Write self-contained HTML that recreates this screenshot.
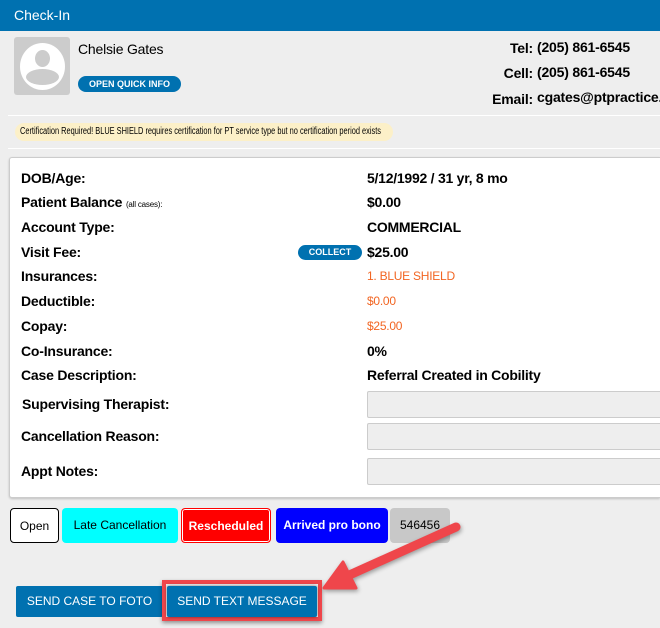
<!DOCTYPE html>
<html><head><meta charset="utf-8"><style>
*{margin:0;padding:0;box-sizing:border-box}
html,body{width:660px;height:628px;overflow:hidden}
body{background:#eee;font-family:"Liberation Sans",Arial,sans-serif;position:relative;color:#000}
#w{position:absolute;left:0;top:0;width:660px;height:628px;overflow:hidden}
.a{position:absolute;white-space:nowrap}
.hdr{left:0;top:0;width:660px;height:31px;background:#0071b0;color:#fff;font-size:14px;line-height:31px;padding-left:14px}
.b{font-weight:bold;font-size:14px;letter-spacing:-0.2px}
.pill{background:#0071b0;color:#fff;font-weight:bold;font-size:9px;border-radius:9px;text-align:center}
.lbl{left:21px;font-weight:bold;font-size:14px;letter-spacing:-0.2px}
.val{left:367px;font-weight:bold;font-size:14px;letter-spacing:-0.25px}
.or{color:#f26522;font-weight:normal;font-size:12px}
.inp{left:367px;width:293px;height:27px;background:#eee;border:1px solid #ccc;border-right:none;border-radius:2px 0 0 2px}
.st{top:508px;height:35px;border-radius:4px;font-size:12px;line-height:35px;text-align:center}
.btn{top:586px;height:31px;background:#0071b0;color:#fff;font-size:12px;line-height:31px;text-align:center;border-radius:2px}
</style></head><body><div id="w">
<div class="a hdr">Check-In</div>
<div class="a" style="left:14px;top:37px;width:56px;height:58px;background:#ccc;border-radius:3px;overflow:hidden">
<div class="a" style="left:6px;top:6px;width:45px;height:47px;background:#fff;border-radius:50%"></div>
<div class="a" style="left:21px;top:13px;width:15px;height:17px;background:#ccc;border-radius:50%"></div>
<div class="a" style="left:12px;top:32px;width:33px;height:16px;background:#ccc;border-radius:50%"></div>
</div>
<div class="a" style="left:78px;top:41px;font-size:14px;letter-spacing:-0.2px">Chelsie Gates</div>
<div class="a pill" style="left:78px;top:76px;width:103px;height:16px;line-height:16px">OPEN QUICK INFO</div>
<div class="a b" style="right:127px;top:40px">Tel:</div><div class="a b" style="left:537px;top:39px">(205) 861-6545</div>
<div class="a b" style="right:127px;top:65px">Cell:</div><div class="a b" style="left:537px;top:64px">(205) 861-6545</div>
<div class="a b" style="right:127px;top:91px">Email:</div><div class="a b" style="left:537px;top:89px;width:123px;overflow:hidden">cgates@ptpractice.com</div>
<div class="a" style="left:8px;top:115px;width:652px;height:1px;background:#fff"></div>
<div class="a" style="left:15px;top:123px;width:378px;height:18px;background:#fcf0c8;border-radius:9px;overflow:hidden"><span class="a" style="left:5px;top:0;font-size:10px;line-height:18px;transform:scaleX(.74);transform-origin:0 0">Certification Required! BLUE SHIELD requires certification for PT service type but no certification period exists</span></div>
<div class="a" style="left:8px;top:148px;width:652px;height:1px;background:#fff"></div>
<div class="a" style="left:9px;top:157px;width:651px;height:341px;background:#fff;border:1px solid #ccc;border-right:none;border-radius:3px 0 0 3px;box-shadow:0 1px 2px rgba(0,0,0,.2)"></div>
<div class="a lbl" style="top:170px">DOB/Age:</div><div class="a val" style="top:170px">5/12/1992 / 31 yr, 8 mo</div>
<div class="a lbl" style="top:194px">Patient Balance <span style="font-weight:normal;font-size:8px">(all cases):</span></div><div class="a val" style="top:194px">$0.00</div>
<div class="a lbl" style="top:219px">Account Type:</div><div class="a val" style="top:219px">COMMERCIAL</div>
<div class="a lbl" style="top:244px">Visit Fee:</div><div class="a pill" style="left:298px;top:245px;width:64px;height:15px;line-height:15px">COLLECT</div><div class="a val" style="top:244px">$25.00</div>
<div class="a lbl" style="top:268px">Insurances:</div><div class="a val or" style="top:269px">1. BLUE SHIELD</div>
<div class="a lbl" style="top:293px">Deductible:</div><div class="a val or" style="top:294px">$0.00</div>
<div class="a lbl" style="top:318px">Copay:</div><div class="a val or" style="top:319px">$25.00</div>
<div class="a lbl" style="top:343px">Co-Insurance:</div><div class="a val" style="top:343px">0%</div>
<div class="a lbl" style="top:367px">Case Description:</div><div class="a val" style="top:367px">Referral Created in Cobility</div>
<div class="a lbl" style="top:396px;left:22px">Supervising Therapist:</div><div class="a inp" style="top:391px"></div>
<div class="a lbl" style="top:428px">Cancellation Reason:</div><div class="a inp" style="top:423px"></div>
<div class="a lbl" style="top:463px">Appt Notes:</div><div class="a inp" style="top:458px"></div>
<div class="a st" style="left:10px;width:49px;background:#fff;border:1px solid #000">Open</div>
<div class="a st" style="left:62px;width:116px;background:#0ff">Late Cancellation</div>
<div class="a st" style="left:181px;width:90px;background:#f00;color:#fff;font-weight:bold;border:1px solid #f00;box-shadow:inset 0 0 0 1px #fff">Rescheduled</div>
<div class="a st" style="left:276px;width:112px;background:#00f;color:#fff;font-weight:bold">Arrived pro bono</div>
<div class="a st" style="left:390px;width:60px;background:#c8c8c8">546456</div>
<div class="a btn" style="left:16px;width:147px">SEND CASE TO FOTO</div>
<div class="a" style="left:162px;top:580px;width:160px;height:41px;border:4px solid #ef464b;box-shadow:0 2px 4px rgba(0,0,0,.4)"></div>
<div class="a btn" style="left:167px;width:150px;box-shadow:0 0 3px rgba(0,0,0,.5)">SEND TEXT MESSAGE</div>
<svg class="a" style="left:0;top:0" width="660" height="628"><g style="filter:drop-shadow(1px 2px 2px rgba(0,0,0,.35))">
<line x1="456" y1="527" x2="345" y2="577" stroke="#ef464b" stroke-width="9" stroke-linecap="round"/>
<polygon points="324,588 343,562 356,588" fill="#ef464b" stroke="#ef464b" stroke-width="3" stroke-linejoin="round"/></g></svg>
</div></body></html>
